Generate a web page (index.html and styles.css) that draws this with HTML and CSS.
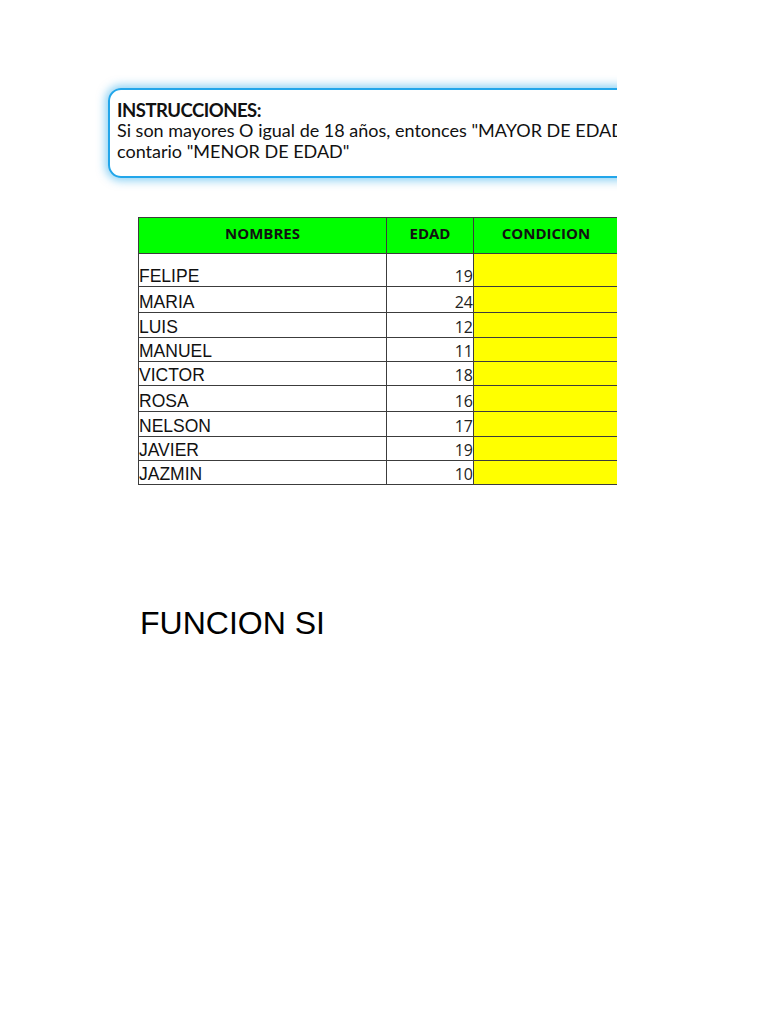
FILE: index.html
```html
<!DOCTYPE html>
<html lang="es">
<head>
<meta charset="utf-8">
<title>Funcion SI</title>
<link rel="stylesheet" href="styles.css">
</head>
<body>
<div class="sheet">
  <div class="note">
    <div class="note-title">INSTRUCCIONES:</div>
    <div class="note-line">Si son mayores O igual de 18 años, entonces "MAYOR DE EDAD", de lo</div>
    <div class="note-line note-last">contario "MENOR DE EDAD"</div>
  </div>

  <table class="grid">
    <colgroup>
      <col class="c-name">
      <col class="c-age">
      <col class="c-cond">
    </colgroup>
    <thead>
      <tr class="r-head">
        <th>NOMBRES</th>
        <th>EDAD</th>
        <th>CONDICION</th>
      </tr>
    </thead>
    <tbody>
      <tr class="r33"><td class="name">FELIPE</td><td class="num">19</td><td class="cond"></td></tr>
      <tr class="r26"><td class="name">MARIA</td><td class="num">24</td><td class="cond"></td></tr>
      <tr class="r25"><td class="name">LUIS</td><td class="num">12</td><td class="cond"></td></tr>
      <tr class="r24"><td class="name">MANUEL</td><td class="num">11</td><td class="cond"></td></tr>
      <tr class="r24"><td class="name">VICTOR</td><td class="num">18</td><td class="cond"></td></tr>
      <tr class="r26"><td class="name">ROSA</td><td class="num">16</td><td class="cond"></td></tr>
      <tr class="r25"><td class="name">NELSON</td><td class="num">17</td><td class="cond"></td></tr>
      <tr class="r24"><td class="name">JAVIER</td><td class="num">19</td><td class="cond"></td></tr>
      <tr class="r24"><td class="name">JAZMIN</td><td class="num">10</td><td class="cond"></td></tr>
    </tbody>
  </table>

  <h1 class="big">FUNCION SI</h1>
</div>
</body>
</html>
```

FILE: styles.css
```css
html, body {
  margin: 0;
  padding: 0;
  background: #ffffff;
}

.sheet {
  width: 617px;
  height: 1024px;
  overflow: hidden;
  padding: 88px 0 0 108px;
  box-sizing: border-box;
}

.note {
  width: 620px;
  height: 90px;
  box-sizing: border-box;
  border: 2px solid #22a6ea;
  border-radius: 13px;
  box-shadow: 0 0 8px 3px rgba(40, 170, 235, 0.5);
  padding: 10px 0 0 7px;
  font-family: Lato, "Open Sans", sans-serif;
  font-size: 18px;
  color: #111;
  white-space: nowrap;
}

.note-title {
  font-weight: 700;
  font-size: 18.5px;
  letter-spacing: -0.5px;
  line-height: 20px;
}

.note-line {
  line-height: 21px;
}

.grid {
  margin: 39px 0 0 30px;
  border-collapse: collapse;
  table-layout: fixed;
  width: 480px;
}

.c-name { width: 248px; }
.c-age { width: 87px; }
.c-cond { width: 145px; }

.grid th,
.grid td {
  border: 1px solid #3c3c3c;
  padding: 0;
  box-sizing: border-box;
}

.r-head { height: 36px; }
.r33 { height: 33px; }
.r26 { height: 26px; }
.r25 { height: 25px; }
.r24 { height: 24px; }

.grid th {
  background: #00ff00;
  font-family: "Open Sans", "Liberation Sans", sans-serif;
  font-weight: 700;
  font-size: 15px;
  line-height: 20px;
  color: #111;
  text-align: center;
  vertical-align: middle;
  padding-bottom: 5px;
}

.grid td {
  vertical-align: bottom;
}

.name {
  font-family: "Liberation Sans", Arial, sans-serif;
  font-size: 17.5px;
  line-height: 20px;
  padding: 0 0 4px 1px;
  color: #111;
}

.num {
  font-family: "Open Sans", "Liberation Sans", sans-serif;
  font-size: 16px;
  line-height: 19px;
  text-align: right;
  padding: 0 1px 3px 0;
  color: #222;
}

.cond {
  background: #ffff00;
}

.big {
  margin: 120px 0 0 32px;
  font-family: "Liberation Sans", Arial, sans-serif;
  font-weight: 400;
  font-size: 32px;
  line-height: 37px;
  color: #000;
}
```
